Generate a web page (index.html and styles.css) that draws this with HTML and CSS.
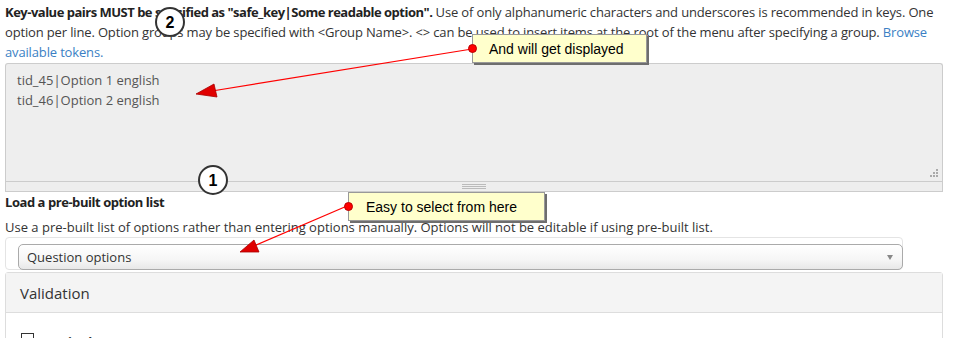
FILE: index.html
```html
<!DOCTYPE html>
<html>
<head>
<meta charset="utf-8">
<link rel="stylesheet" href="styles.css">
</head>
<body>
<div class="page">
  <div class="desc top-desc"><strong>Key-value pairs MUST be specified as "safe_key|Some readable option".</strong> Use of only alphanumeric characters and underscores is recommended in keys. One option per line. Option groups may be specified with &lt;Group Name&gt;. &lt;&gt; can be used to insert items at the root of the menu after specifying a group. <a class="link" href="#">Browse available tokens.</a></div>

  <div class="textarea-wrap">
    <div class="textarea">
      <div>tid_45|Option 1 english</div>
      <div>tid_46|Option 2 english</div>
      <svg class="resize" width="8" height="8" viewBox="0 0 8 8"><rect x="6" y="0" width="2" height="2" fill="#aaa"/><rect x="3" y="3" width="2" height="2" fill="#aaa"/><rect x="6" y="3" width="2" height="2" fill="#aaa"/><rect x="0" y="6" width="2" height="2" fill="#aaa"/><rect x="3" y="6" width="2" height="2" fill="#aaa"/><rect x="6" y="6" width="2" height="2" fill="#aaa"/></svg>
    </div>
    <div class="grippie"><span class="grip"></span></div>
  </div>

  <div class="label">Load a pre-built option list</div>
  <div class="desc">Use a pre-built list of options rather than entering options manually. Options will not be editable if using pre-built list.</div>

  <div class="select-wrap">
    <div class="select"><span>Question options</span><span class="caret"></span></div>
  </div>

  <div class="panel">
    <div class="panel-head">Validation</div>
    <div class="panel-body">
      <div class="check-row"><span class="checkbox"></span><strong>Required</strong></div>
    </div>
  </div>
</div>

<svg class="annot" width="961" height="338" viewBox="0 0 961 338">
  <line x1="472" y1="49" x2="212" y2="91" stroke="#ff0000" stroke-width="1.2"/>
  <polygon points="196,94 214,84 217,97" fill="#e00000" stroke="#a00" stroke-width="0.8"/>
  <line x1="347" y1="206" x2="254" y2="246" stroke="#ff0000" stroke-width="1.2"/>
  <polygon points="240,252 254,240 259,252" fill="#e00000" stroke="#a00" stroke-width="0.8"/>
  <circle cx="170" cy="22" r="14" fill="#fff" stroke="#333" stroke-width="2"/>
  <text x="170" y="28" text-anchor="middle" class="num">2</text>
  <circle cx="213" cy="180" r="14" fill="#fff" stroke="#333" stroke-width="2"/>
  <text x="213" y="186" text-anchor="middle" class="num">1</text>
</svg>

<div class="tip tip-a"><span class="dot"></span>And will get displayed</div>
<div class="tip tip-b"><span class="dot"></span>Easy to select from here</div>
</body>
</html>
```
FILE: styles.css
```css
html, body {
  margin: 0;
  padding: 0;
  background: #fff;
}
body {
  font-family: "Open Sans", "DejaVu Sans", sans-serif;
  font-size: 13px;
  color: #333;
  width: 961px;
  height: 338px;
  overflow: hidden;
  position: relative;
}
.page {
  padding: 2px 18px 0 5px;
}
.desc {
  line-height: 20px;
}
.top-desc {
  letter-spacing: -0.15px;
}
strong {
  letter-spacing: -0.5px;
}
.top-desc strong {
  color: #222;
}
.link {
  color: #3b7fc4;
  text-decoration: none;
}
.textarea-wrap {
  margin-top: 1px;
}
.textarea {
  position: relative;
  height: 111px;
  background: #eee;
  border: 1px solid #ccc;
  border-bottom: none;
  border-radius: 3px 3px 0 0;
  padding: 6px 11px 0;
  color: #555;
  line-height: 20px;
  font-size: 13px;
}
.resize {
  position: absolute;
  right: 4px;
  bottom: 4px;
}
.grippie {
  height: 9px;
  background: #eee;
  border: 1px solid #ccc;
  display: flex;
  justify-content: center;
  align-items: center;
}
.grip {
  width: 24px;
  height: 5px;
  border-top: 1px solid #bbb;
  border-bottom: 1px solid #bbb;
  box-sizing: border-box;
  background: linear-gradient(#bbb, #bbb) center / 100% 1px no-repeat;
}
.label {
  font-weight: bold;
  letter-spacing: -0.45px;
  line-height: 20px;
  color: #222;
}
.label + .desc {
  margin-top: 5px;
}
.select-wrap {
  width: 898px;
  height: 33px;
  border: 1px solid #e4e4e4;
  border-radius: 4px;
  padding: 6px 0 0 12px;
  box-sizing: border-box;
}
.select {
  width: 885px;
  height: 26px;
  box-sizing: border-box;
  border: 1px solid #aaa;
  border-radius: 5px;
  background: linear-gradient(#fff 0%, #f6f6f6 60%, #e8e8e8 100%);
  display: flex;
  align-items: center;
  justify-content: space-between;
  padding: 0 8px;
  color: #333;
}
.caret {
  width: 0;
  height: 0;
  border-left: 3.5px solid transparent;
  border-right: 3.5px solid transparent;
  border-top: 5px solid #888;
  margin-right: 1px;
}
.panel {
  margin-top: 2px;
  border: 1px solid #ddd;
  border-radius: 3px 3px 0 0;
  height: 80px;
}
.panel-head {
  background: #f4f4f4;
  border-bottom: 1px solid #ddd;
  height: 40px;
  box-sizing: border-box;
  padding: 0 14px;
  display: flex;
  align-items: center;
  font-size: 15px;
  color: #333;
}
.panel-body {
  padding: 19px 15px 0;
}
.check-row {
  display: flex;
  align-items: flex-start;
  gap: 3px;
  line-height: 20px;
}
.checkbox {
  width: 11px;
  height: 11px;
  border: 1px solid #333;
  display: inline-block;
  margin-top: 1px;
}
.annot {
  position: absolute;
  left: 0;
  top: 0;
}
.num {
  font-family: "Liberation Sans", Arial, sans-serif;
  font-weight: bold;
  font-size: 16px;
  fill: #000;
}
.tip {
  position: absolute;
  background: #ffffcc;
  border: 1px solid #999;
  box-shadow: 2px 2px 0 #6e6e6e;
  font-family: "Liberation Sans", Arial, sans-serif;
  font-size: 14px;
  color: #000;
  display: flex;
  align-items: center;
  box-sizing: border-box;
}
.tip-a {
  left: 472px;
  top: 34px;
  width: 175px;
  height: 29px;
  padding-left: 16px;
}
.tip-b {
  left: 348px;
  top: 192px;
  width: 197px;
  height: 29px;
  padding-left: 17px;
}
.dot {
  position: absolute;
  left: -5px;
  top: 9px;
  width: 9px;
  height: 9px;
  border-radius: 50%;
  background: #ff0000;
  border: 1px solid #b00;
  box-sizing: border-box;
}
```
